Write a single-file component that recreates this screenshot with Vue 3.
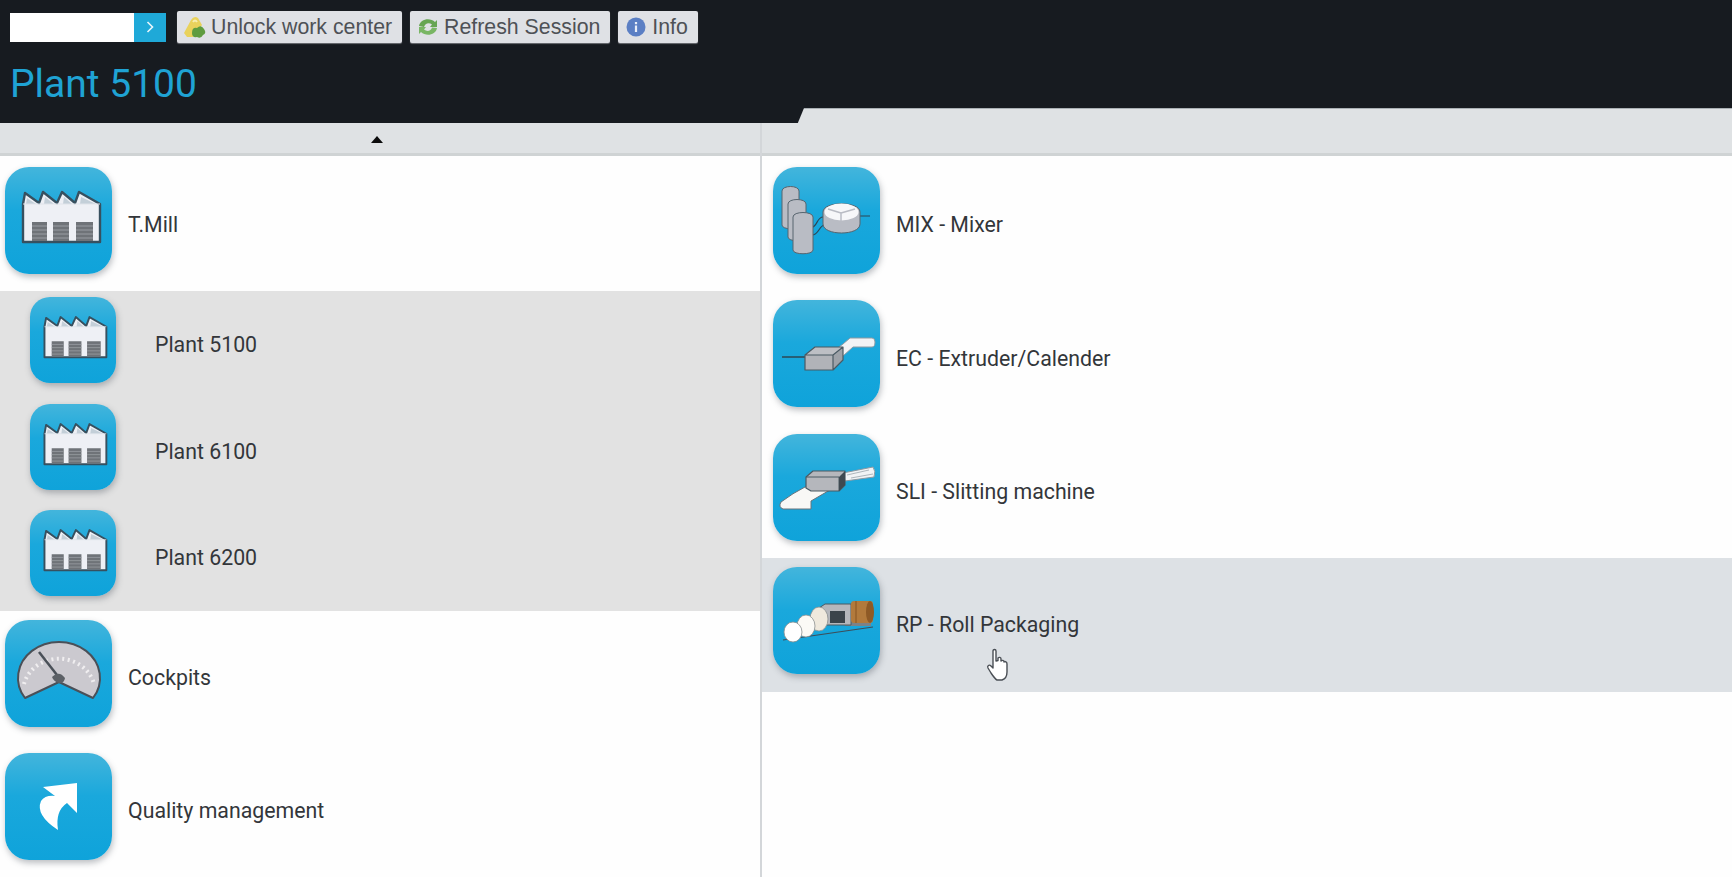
<script setup>
const leftRows = [
  { label: "T.Mill", icon: "factory" },
  { label: "Cockpits", icon: "gauge" },
  { label: "Quality management", icon: "arrow" },
];
const plants = ["Plant 5100", "Plant 6100", "Plant 6200"];
const rightRows = [
  { label: "MIX - Mixer", icon: "mixer" },
  { label: "EC - Extruder/Calender", icon: "extruder" },
  { label: "SLI - Slitting machine", icon: "slitter" },
  { label: "RP - Roll Packaging", icon: "packaging", active: true },
];
</script>

<template>
  <div class="page">
    <svg width="0" height="0" class="defs">
      <defs>
        <g id="ic-factory">
          <path d="M18 37 L20 26 L34 36 L38 25 L52 36 L57 25 L70 36 L74 25 L95 37 V75 H18 Z" fill="#eef0f5" stroke="#37505f" stroke-width="2.400" stroke-linejoin="round" />
          <path d="M22 31 L31 37 H21 Z M40 30 L49 37 H39 Z M59 30 L67 37 H58 Z M76 30 L91 37 H75 Z" fill="#c3cfd8" />
          <path d="M18 37 H95" stroke="#dfe3ea" stroke-width="1" />
          <path fill="#6f7378" d="M27 55 H42 V74 H27 Z M48 55 H64 V74 H48 Z M71 55 H88 V74 H71 Z" />
          <path stroke="#9a9ea3" stroke-width="1" d="M27 59 H42 M27 63 H42 M27 67 H42 M27 71 H42 M48 59 H64 M48 63 H64 M48 67 H64 M48 71 H64 M71 59 H88 M71 63 H88 M71 67 H88 M71 71 H88" />
        </g>
        <g id="ic-gauge">
          <path d="M20 78 A41 36 0 1 1 88 78 L54 62 Z" fill="#cbc9cf" stroke="#4a5058" stroke-width="2" stroke-linejoin="round" />
          <path d="M19 64 A36 33 0 0 1 89 64" fill="none" stroke="#f0eef0" stroke-width="4" stroke-dasharray="2 3.500" />
          <path d="M34 32 L52 55" stroke="#4a5058" stroke-width="2.500" />
          <path d="M47 57 Q54 50 60 58 Q59 64 54 63 Q49 62 47 57 Z" fill="#5c6066" />
        </g>
        <g id="ic-arrow">
          <path d="M38 34 L72 30 L72 60 L62 50 Q50 58 53 77 Q30 62 36 48 Q40 42 50 43 Z" fill="#fff" />
        </g>
        <g id="ic-mixer">
          <path d="M39 60 C44 60 44 50 50 50 M39 68 C46 68 46 58 52 58 M87 49 H97" fill="none" stroke="#2d4754" stroke-width="1.200" />
          <path class="cyl" d="M9 24 C9 18 26 18 26 24 V58 C26 63 9 63 9 58 Z" />
          <path class="cyl" d="M15 37 C15 31 33 31 33 37 V70 C33 75 15 75 15 70 Z" />
          <path class="cyl" d="M20 50 C20 44 40 44 40 50 V83 C40 88 20 88 20 83 Z" />
          <path class="cyl" d="M50 45 C50 34 87 34 87 45 V57 C87 69 50 69 50 57 Z" />
          <ellipse cx="68.500" cy="45" rx="17" ry="8.500" fill="#f6f7f9" />
          <path d="M68 46 V54 M68 46 L55 42 M68 46 L82 42" stroke="#b9bcc4" stroke-width="1.500" />
        </g>
        <g id="ic-extruder">
          <path d="M9 57 H32" stroke="#2d4754" stroke-width="1.500" />
          <path d="M62 50 L70 44 L77 38 H99 Q102 38 102 42 Q102 47 99 47 H80 L70 56 Z" fill="#f1f3f5" stroke="#8d9aa3" stroke-width="1" stroke-linejoin="round" />
          <path d="M32 55 L42 47 H70 L60 55 Z" fill="#bdbfc4" />
          <path d="M60 55 L70 47 V60 L60 70 Z" fill="#9ea2a8" />
          <path d="M32 55 H60 V70 H32 Z" fill="#b1b3b8" />
          <path d="M32 55 L42 47 H70 V60 L60 70 H32 Z M32 55 H60 L70 47 M60 55 V70" fill="none" stroke="#4b5a63" stroke-width="1.200" stroke-linejoin="round" />
        </g>
        <g id="ic-slitter">
          <path d="M70 39 L100 33 Q103 37 101 43 L72 47 Z" fill="#f1f3f5" stroke="#8d9aa3" stroke-width="1" stroke-linejoin="round" />
          <path d="M74 41 L96 36 M78 44 L100 40" stroke="#aeb6bc" stroke-width="1" />
          <path d="M8 68 Q20 59 32 53 H62 L38 67 V75 H10 Q5 73 8 68 Z" fill="#f8f8f6" stroke="#69747c" stroke-width="1" stroke-linejoin="round" />
          <path d="M33 43 L40 37 H72 V51 L66 57 H38 L33 54 Z" fill="#b5b7bc" stroke="#4b5a63" stroke-width="1.200" stroke-linejoin="round" />
          <path d="M33 43 H66 V57" fill="none" stroke="#4b5a63" stroke-width="1" />
          <path d="M66 43 L72 37 V51 L66 57 Z" fill="#3f4a52" />
        </g>
        <g id="ic-packaging">
          <path d="M10 73 L100 60" stroke="#3d4d58" stroke-width="1.200" />
          <rect x="72" y="55" width="26" height="4" fill="#7c8287" />
          <path d="M40 45 L52 37 H78 V58 H46 Z" fill="#b5b7bc" stroke="#4b5a63" stroke-width="1" />
          <path d="M57 44 H72 V56 H57 Z" fill="#3b444b" />
          <rect x="78" y="34" width="22" height="22" rx="3" fill="#b27a3c" />
          <path d="M83 34 V56" stroke="#8e5a26" stroke-width="1.200" />
          <ellipse cx="97" cy="45" rx="4" ry="11" fill="#8e5a26" />
          <ellipse cx="46" cy="52" rx="9" ry="12" fill="#efe9dd" stroke="#8b8f8f" stroke-width="0.800" />
          <ellipse cx="33" cy="59" rx="9" ry="11" fill="#fbfaf6" stroke="#8b8f8f" stroke-width="0.800" />
          <ellipse cx="20" cy="65" rx="9" ry="10" fill="#fff" stroke="#8b8f8f" stroke-width="0.800" />
        </g>
      </defs>
    </svg>

    <header class="head">
      <div class="toolbar">
        <div class="search">
          <input class="search-input" type="text" />
          <button class="search-go">
            <svg width="10" height="14" viewBox="0 0 10 14"><path d="M2.500 2 L7.500 7 L2.500 12" fill="none" stroke="#e8f6fb" stroke-width="1.600" /></svg>
          </button>
        </div>
        <button class="tool-btn">
          <svg width="24" height="24" viewBox="0 0 24 24">
            <path d="M1 18 L8 5 Q11 0 15 3 L19 10 L10 22 H4 Z" fill="#e9d25c" />
            <path d="M10 7 Q12 4 14 7" fill="none" stroke="#f7eeb0" stroke-width="2" />
            <path d="M9 18 Q9 12 14 13 Q18 9 21 14 Q24 18 20 20 Q18 24 14 22 Q9 23 9 18 Z" fill="#5f9c3f" />
          </svg>
          Unlock work center
        </button>
        <button class="tool-btn">
          <svg width="24" height="24" viewBox="0 0 24 24">
            <path d="M3 11 C4 4 14 2 19 7 L21 5 V12 H14 L16 9.500 C13 7 9 8 8 12 Z" fill="#66a552" />
            <path d="M21 13 C20 20 10 22 5 17 L3 19 V12 H10 L8 14.500 C11 17 15 16 16 12.500 Z" fill="#79b664" />
          </svg>
          Refresh Session
        </button>
        <button class="tool-btn">
          <svg width="24" height="24" viewBox="0 0 24 24">
            <circle cx="12" cy="12" r="9.500" fill="#5b7fc4" />
            <rect x="10.900" y="10.500" width="2.200" height="6.500" fill="#e9eef8" />
            <rect x="10.900" y="7" width="2.200" height="2.200" fill="#e9eef8" />
          </svg>
          Info
        </button>
      </div>
      <h1 class="title">Plant 5100</h1>
    </header>

    <div class="notch"></div>

    <div class="columns">
      <section class="col-left">
        <div class="left-top">
          <div class="bar">
            <span class="sort-arrow"></span>
          </div>
        </div>
        <div class="list">
          <div class="row">
            <svg class="icon" viewBox="0 0 107 107"><use href="#ic-factory" /></svg>
            <span>{{ leftRows[0].label }}</span>
          </div>
          <div class="sub-group">
            <div v-for="p in plants" :key="p" class="sub-row">
              <svg class="icon small" viewBox="0 0 107 107"><use href="#ic-factory" /></svg>
              <span>{{ p }}</span>
            </div>
          </div>
          <div v-for="r in leftRows.slice(1)" :key="r.label" class="row">
            <svg class="icon" viewBox="0 0 107 107"><use :href="'#ic-' + r.icon" /></svg>
            <span>{{ r.label }}</span>
          </div>
        </div>
      </section>

      <section class="col-right">
        <div class="bar bar-right"></div>
        <div class="list">
          <div v-for="r in rightRows" :key="r.label" class="row" :class="{ active: r.active }">
            <svg class="icon" viewBox="0 0 107 107"><use :href="'#ic-' + r.icon" /></svg>
            <span>{{ r.label }}</span>
          </div>
        </div>
      </section>
    </div>

    <svg class="cursor" width="24" height="34" viewBox="0 0 24 34">
      <path d="M7 3 C7 1 10 1 10 3 V13 L12 12.500 V10 C13 9 15 9 15 11 L15 13 C16 12 18 12 18 14 C19 13 21 14 21 16 V24 C21 28 19 31 16 32 H11 C9 31 7 28 5 25 L2 20 C1 18 3 16 5 18 L7 20 Z" fill="#fff" stroke="#4a4f55" stroke-width="1.400" stroke-linejoin="round" />
    </svg>
  </div>
</template>

<style>
html,
body {
  margin: 0;
  background: #fff;
}
</style>

<style scoped>
.page {
  position: relative;
  width: 1732px;
  height: 877px;
  overflow: hidden;
  background: #fefefe;
  font-family: Roboto, "Liberation Sans", sans-serif;
  color: #33363a;
}

.defs {
  position: absolute;
}

.cyl {
  fill: #b9bcc4;
  stroke: #56646e;
  stroke-width: 1;
}

.head {
  height: 108px;
  background: #171b20;
  box-sizing: border-box;
  padding: 11px 0 0 10px;
}

.toolbar {
  display: flex;
  align-items: center;
  height: 32px;
}

.search {
  display: flex;
  height: 29px;
  margin-right: 11px;
}

.search-input {
  width: 124px;
  height: 29px;
  box-sizing: border-box;
  border: none;
  background: #fff;
  padding: 0;
}

.search-go {
  width: 32px;
  height: 29px;
  border: none;
  padding: 0;
  background: #1fa9d8;
  display: flex;
  align-items: center;
  justify-content: center;
}

.tool-btn {
  display: flex;
  align-items: center;
  gap: 4px;
  height: 32px;
  box-sizing: border-box;
  margin-right: 8px;
  padding: 0 10px 0 6px;
  border: none;
  border-radius: 2px;
  background: #dfe1e5;
  box-shadow: 0 1px 1px #6d7075;
  font-family: "Liberation Sans", Arial, sans-serif;
  font-size: 21.300px;
  color: #4e5156;
  white-space: nowrap;
}

.title {
  margin: 20px 0 0;
  font-size: 39px;
  line-height: 42px;
  font-weight: 400;
  color: #1fa3d4;
}

.notch {
  position: absolute;
  left: 760px;
  top: 108px;
  width: 44px;
  height: 15px;
  background: #171b20;
  clip-path: polygon(0 0, 100% 0, 86% 100%, 0 100%);
}

.columns {
  display: flex;
}

.col-left {
  width: 760px;
  flex: none;
}

.left-top {
  background: #171b20;
  padding-top: 15px;
}

.col-right {
  flex: 1;
  border-left: 2px solid #d3d6d9;
}

.bar {
  height: 33px;
  box-sizing: border-box;
  background: #dfe2e4;
  border-bottom: 3px solid #cfd3d4;
  display: flex;
  align-items: center;
  justify-content: center;
}

.bar-right {
  height: 48px;
  border-top: 1px solid #aab0b4;
}

.sort-arrow {
  width: 0;
  height: 0;
  margin: 2px 6px 0 0;
  border-left: 6px solid transparent;
  border-right: 6px solid transparent;
  border-bottom: 7px solid #0c0c0c;
}

.list {
  padding-top: 2px;
  font-size: 21.300px;
}

.row {
  display: flex;
  align-items: center;
  gap: 16px;
  height: 133.400px;
  padding-left: 5px;
}

.col-right .row {
  padding-left: 11px;
}

.row.active {
  background: #dde1e5;
}

.icon {
  flex: none;
  align-self: flex-start;
  width: 107px;
  height: 107px;
  margin-top: 9px;
  border-radius: 24px;
  background: linear-gradient(180deg, #43b5dc 0%, #1aa8dc 40%, #0fa3da 100%);
  box-shadow: 1px 3px 6px rgba(60, 70, 80, 0.35);
}

.sub-group {
  background: #e2e2e2;
}

.sub-row {
  display: flex;
  align-items: center;
  gap: 39px;
  height: 106.500px;
  padding-left: 30px;
}

.icon.small {
  width: 86px;
  height: 86px;
  margin-top: 6px;
  border-radius: 20px;
}

.cursor {
  position: absolute;
  left: 986px;
  top: 648px;
}
</style>
